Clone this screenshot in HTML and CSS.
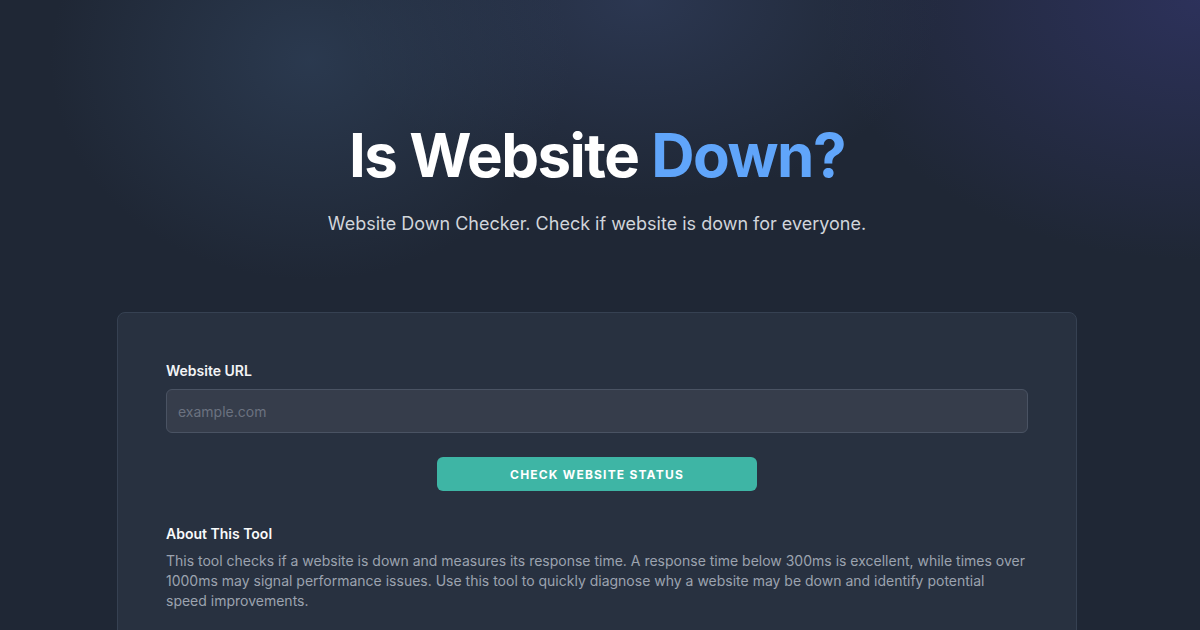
FILE: index.html
```html
<!DOCTYPE html>
<html lang="en">
<head>
<meta charset="utf-8">
<title>Is Website Down?</title>
<link rel="stylesheet" href="styles.css">
</head>
<body>
<main class="page">
  <header class="hero">
    <h1 class="title">Is Website <span class="accent">Down?</span></h1>
    <p class="subtitle">Website Down Checker. Check if website is down for everyone.</p>
  </header>
  <section class="card">
    <form class="form">
      <label class="label" for="url">Website URL</label>
      <input class="input" id="url" type="text" placeholder="example.com">
      <button class="button" type="button">Check Website Status</button>
    </form>
    <div class="about">
      <h2 class="about-title">About This Tool</h2>
      <p class="about-text">This tool checks if a website is down and measures its response time. A response time below 300ms is excellent, while times over 1000ms may signal performance issues. Use this tool to quickly diagnose why a website may be down and identify potential speed improvements.</p>
    </div>
  </section>
</main>
</body>
</html>
```

FILE: styles.css
```css
* { box-sizing: border-box; }
html, body { margin: 0; height: 100%; }
body {
  font-family: Inter, "Noto Sans", sans-serif;
  background-color: #1f2735;
  background-image:
    radial-gradient(ellipse 260px 220px at 310px 60px, rgba(52, 72, 100, 0.55), rgba(52, 72, 100, 0) 100%),
    radial-gradient(ellipse 300px 200px at 640px 0px, rgba(52, 66, 100, 0.6), rgba(52, 66, 100, 0) 100%),
    radial-gradient(ellipse 380px 260px at 1200px 0px, rgba(48, 52, 100, 0.8), rgba(48, 52, 100, 0) 100%);
  color: #fff;
  overflow: hidden;
  padding-right: 6px;
}
.page {
  width: 960px;
  margin: 0 auto;
  padding-top: 122px;
}
.hero { text-align: center; }
.title {
  margin: 0;
  font-size: 60px;
  line-height: 66px;
  font-weight: 700;
  letter-spacing: -1.5px;
  color: #ffffff;
}
.accent { color: #60a5fa; }
.subtitle {
  margin: 22px 0 0;
  font-size: 18px;
  line-height: 28px;
  color: #d1d5db;
}
.card {
  margin-top: 74px;
  background: #283140;
  border: 1px solid #364152;
  border-radius: 8px;
  padding: 48px 48px 40px;
}
.form { display: flex; flex-direction: column; }
.label {
  font-size: 14px;
  font-weight: 600;
  line-height: 20px;
  color: #f3f4f6;
  margin-bottom: 8px;
}
.input {
  height: 44px;
  background: #363d4b;
  border: 1px solid #4a5363;
  border-radius: 6px;
  padding: 0 11px;
  font-family: inherit;
  font-size: 14px;
  color: #fff;
  outline: none;
}
.input::placeholder { color: #6b7280; }
.button {
  align-self: center;
  margin-top: 24px;
  width: 320px;
  height: 34px;
  border: none;
  border-radius: 6px;
  background: #3eb5a5;
  color: #fff;
  font-family: inherit;
  font-size: 12px;
  font-weight: 700;
  letter-spacing: 1.2px;
  text-transform: uppercase;
}
.about { margin-top: 33px; }
.about-title {
  margin: 0;
  font-size: 14px;
  font-weight: 600;
  line-height: 20px;
  color: #f9fafb;
}
.about-text {
  margin: 7px 0 0;
  max-width: 860px;
  font-size: 14px;
  line-height: 20px;
  color: #9ca3af;
}
```
